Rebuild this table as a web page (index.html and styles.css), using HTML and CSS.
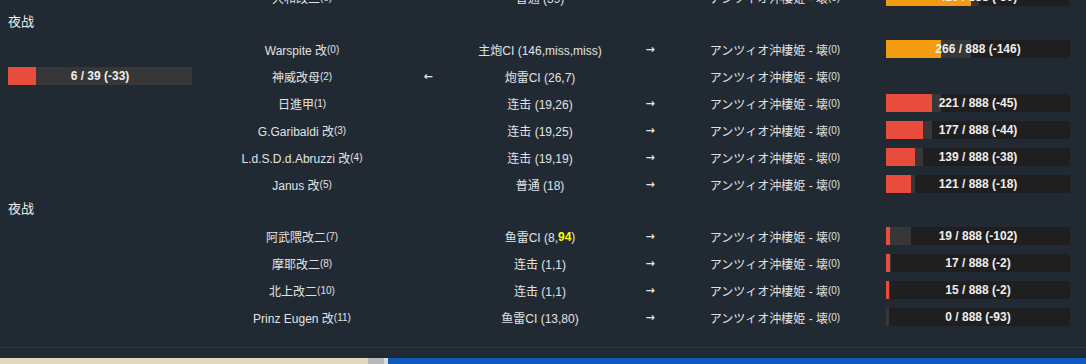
FILE: index.html
```html
<!DOCTYPE html>
<html lang="zh-CN">
<head>
<meta charset="utf-8">
<title>夜战</title>
<link rel="stylesheet" href="styles.css">
</head>
<body>
<div class="viewport">
  <div class="log">
    <div class="row">
      <div class="cell bar-cell"></div>
      <div class="cell name">大和改二<small>(6)</small></div>
      <div class="cell arrow"></div>
      <div class="cell attack">普通 (39)</div>
      <div class="cell arrow">→</div>
      <div class="cell name">アンツィオ沖棲姫 - 壊<small>(0)</small></div>
      <div class="cell bar-cell">
        <div class="hp"><div class="segs"><span class="fill orange" style="width:46.17%"></span><span class="lost" style="width:4.39%"></span></div><span class="label">410 / 888 (-39)</span></div>
      </div>
    </div>

    <div class="phase">夜战</div>

    <div class="row">
      <div class="cell bar-cell"></div>
      <div class="cell name">Warspite 改<small>(0)</small></div>
      <div class="cell arrow"></div>
      <div class="cell attack">主炮CI (146,miss,miss)</div>
      <div class="cell arrow">→</div>
      <div class="cell name">アンツィオ沖棲姫 - 壊<small>(0)</small></div>
      <div class="cell bar-cell">
        <div class="hp"><div class="segs"><span class="fill orange" style="width:29.95%"></span><span class="lost" style="width:16.44%"></span></div><span class="label">266 / 888 (-146)</span></div>
      </div>
    </div>
    <div class="row">
      <div class="cell bar-cell">
        <div class="hp"><div class="segs"><span class="fill red" style="width:15.38%"></span><span class="lost" style="width:84.62%"></span></div><span class="label">6 / 39 (-33)</span></div>
      </div>
      <div class="cell name">神威改母<small>(2)</small></div>
      <div class="cell arrow">←</div>
      <div class="cell attack">炮雷CI (26,7)</div>
      <div class="cell arrow"></div>
      <div class="cell name">アンツィオ沖棲姫 - 壊<small>(0)</small></div>
      <div class="cell bar-cell"></div>
    </div>
    <div class="row">
      <div class="cell bar-cell"></div>
      <div class="cell name">日進甲<small>(1)</small></div>
      <div class="cell arrow"></div>
      <div class="cell attack">连击 (19,26)</div>
      <div class="cell arrow">→</div>
      <div class="cell name">アンツィオ沖棲姫 - 壊<small>(0)</small></div>
      <div class="cell bar-cell">
        <div class="hp"><div class="segs"><span class="fill red" style="width:24.89%"></span><span class="lost" style="width:5.07%"></span></div><span class="label">221 / 888 (-45)</span></div>
      </div>
    </div>
    <div class="row">
      <div class="cell bar-cell"></div>
      <div class="cell name">G.Garibaldi 改<small>(3)</small></div>
      <div class="cell arrow"></div>
      <div class="cell attack">连击 (19,25)</div>
      <div class="cell arrow">→</div>
      <div class="cell name">アンツィオ沖棲姫 - 壊<small>(0)</small></div>
      <div class="cell bar-cell">
        <div class="hp"><div class="segs"><span class="fill red" style="width:19.93%"></span><span class="lost" style="width:4.95%"></span></div><span class="label">177 / 888 (-44)</span></div>
      </div>
    </div>
    <div class="row">
      <div class="cell bar-cell"></div>
      <div class="cell name">L.d.S.D.d.Abruzzi 改<small>(4)</small></div>
      <div class="cell arrow"></div>
      <div class="cell attack">连击 (19,19)</div>
      <div class="cell arrow">→</div>
      <div class="cell name">アンツィオ沖棲姫 - 壊<small>(0)</small></div>
      <div class="cell bar-cell">
        <div class="hp"><div class="segs"><span class="fill red" style="width:15.65%"></span><span class="lost" style="width:4.28%"></span></div><span class="label">139 / 888 (-38)</span></div>
      </div>
    </div>
    <div class="row">
      <div class="cell bar-cell"></div>
      <div class="cell name">Janus 改<small>(5)</small></div>
      <div class="cell arrow"></div>
      <div class="cell attack">普通 (18)</div>
      <div class="cell arrow">→</div>
      <div class="cell name">アンツィオ沖棲姫 - 壊<small>(0)</small></div>
      <div class="cell bar-cell">
        <div class="hp"><div class="segs"><span class="fill red" style="width:13.63%"></span><span class="lost" style="width:2.03%"></span></div><span class="label">121 / 888 (-18)</span></div>
      </div>
    </div>

    <div class="phase">夜战</div>

    <div class="row">
      <div class="cell bar-cell"></div>
      <div class="cell name">阿武隈改二<small>(7)</small></div>
      <div class="cell arrow"></div>
      <div class="cell attack">鱼雷CI (8,<b class="crit">94</b>)</div>
      <div class="cell arrow">→</div>
      <div class="cell name">アンツィオ沖棲姫 - 壊<small>(0)</small></div>
      <div class="cell bar-cell">
        <div class="hp"><div class="segs"><span class="fill red" style="width:2.14%"></span><span class="lost" style="width:11.49%"></span></div><span class="label">19 / 888 (-102)</span></div>
      </div>
    </div>
    <div class="row">
      <div class="cell bar-cell"></div>
      <div class="cell name">摩耶改二<small>(8)</small></div>
      <div class="cell arrow"></div>
      <div class="cell attack">连击 (1,1)</div>
      <div class="cell arrow">→</div>
      <div class="cell name">アンツィオ沖棲姫 - 壊<small>(0)</small></div>
      <div class="cell bar-cell">
        <div class="hp"><div class="segs"><span class="fill red" style="width:1.91%"></span><span class="lost" style="width:0.23%"></span></div><span class="label">17 / 888 (-2)</span></div>
      </div>
    </div>
    <div class="row">
      <div class="cell bar-cell"></div>
      <div class="cell name">北上改二<small>(10)</small></div>
      <div class="cell arrow"></div>
      <div class="cell attack">连击 (1,1)</div>
      <div class="cell arrow">→</div>
      <div class="cell name">アンツィオ沖棲姫 - 壊<small>(0)</small></div>
      <div class="cell bar-cell">
        <div class="hp"><div class="segs"><span class="fill red" style="width:1.69%"></span><span class="lost" style="width:0.23%"></span></div><span class="label">15 / 888 (-2)</span></div>
      </div>
    </div>
    <div class="row">
      <div class="cell bar-cell"></div>
      <div class="cell name">Prinz Eugen 改<small>(11)</small></div>
      <div class="cell arrow"></div>
      <div class="cell attack">鱼雷CI (13,80)</div>
      <div class="cell arrow">→</div>
      <div class="cell name">アンツィオ沖棲姫 - 壊<small>(0)</small></div>
      <div class="cell bar-cell">
        <div class="hp"><div class="segs"><span class="fill red" style="width:0%"></span><span class="lost" style="width:1.69%"></span></div><span class="label">0 / 888 (-93)</span></div>
      </div>
    </div>
  </div>
  <div class="gap"></div>
  <div class="taskbar">
    <div class="tb-beige"></div>
    <div class="tb-gray"></div>
    <div class="tb-light"></div>
    <div class="tb-blue"></div>
  </div>
</div>
</body>
</html>
```

FILE: styles.css
```css
html, body {
  margin: 0;
  padding: 0;
  height: 364px;
  overflow: hidden;
  background: #212a33;
}

body {
  font-family: "Liberation Sans", Arial, "Noto Sans CJK SC", sans-serif;
  font-size: 12px;
  color: #e2e2e2;
}

.viewport {
  display: flex;
  flex-direction: column;
  height: 364px;
  overflow: hidden;
}

.log {
  margin-top: -16px;
  padding: 0 8px 16px 8px;
  border-bottom: 1px solid #2c353f;
}

.row {
  display: grid;
  grid-template-columns: 184px 220px 32px 192px 28px 222px 184px;
  height: 27px;
  align-items: start;
}

.cell {
  height: 27px;
  display: flex;
  align-items: center;
  justify-content: center;
  white-space: nowrap;
}

.bar-cell {
  align-items: flex-start;
  padding-top: 4px;
  box-sizing: border-box;
}

.name small {
  font-size: 10px;
}

.arrow {
  font-family: "DejaVu Sans", sans-serif;
  font-size: 11px;
  font-weight: bold;
}

.crit {
  color: #ffff00;
  font-weight: bold;
}

.phase {
  height: 25px;
  box-sizing: border-box;
  padding-top: 3px;
  line-height: 16px;
  font-size: 13px;
  color: #eeeeee;
}

.hp {
  display: grid;
  width: 184px;
  height: 18px;
  background: #1f1f1f;
}

.segs, .label {
  grid-area: 1 / 1;
}

.segs {
  display: flex;
  height: 18px;
}

.fill, .lost {
  display: block;
  height: 18px;
}

.fill.orange { background: #f39c12; }
.fill.red { background: #e74c3c; }
.lost { background: #373737; }

.label {
  align-self: center;
  justify-self: center;
  font-weight: bold;
  font-size: 12px;
  line-height: 18px;
  color: #eeeeee;
  white-space: nowrap;
}

.gap {
  height: 10px;
  flex: none;
}

.taskbar {
  flex: 1;
  display: flex;
}

.tb-beige { width: 368px; background: #e2d9bf; }
.tb-gray { width: 16px; background: #b9b9b9; }
.tb-light { width: 4px; background: #dcdcdc; }
.tb-blue { flex: 1; background: #0d5ac0; }
```
